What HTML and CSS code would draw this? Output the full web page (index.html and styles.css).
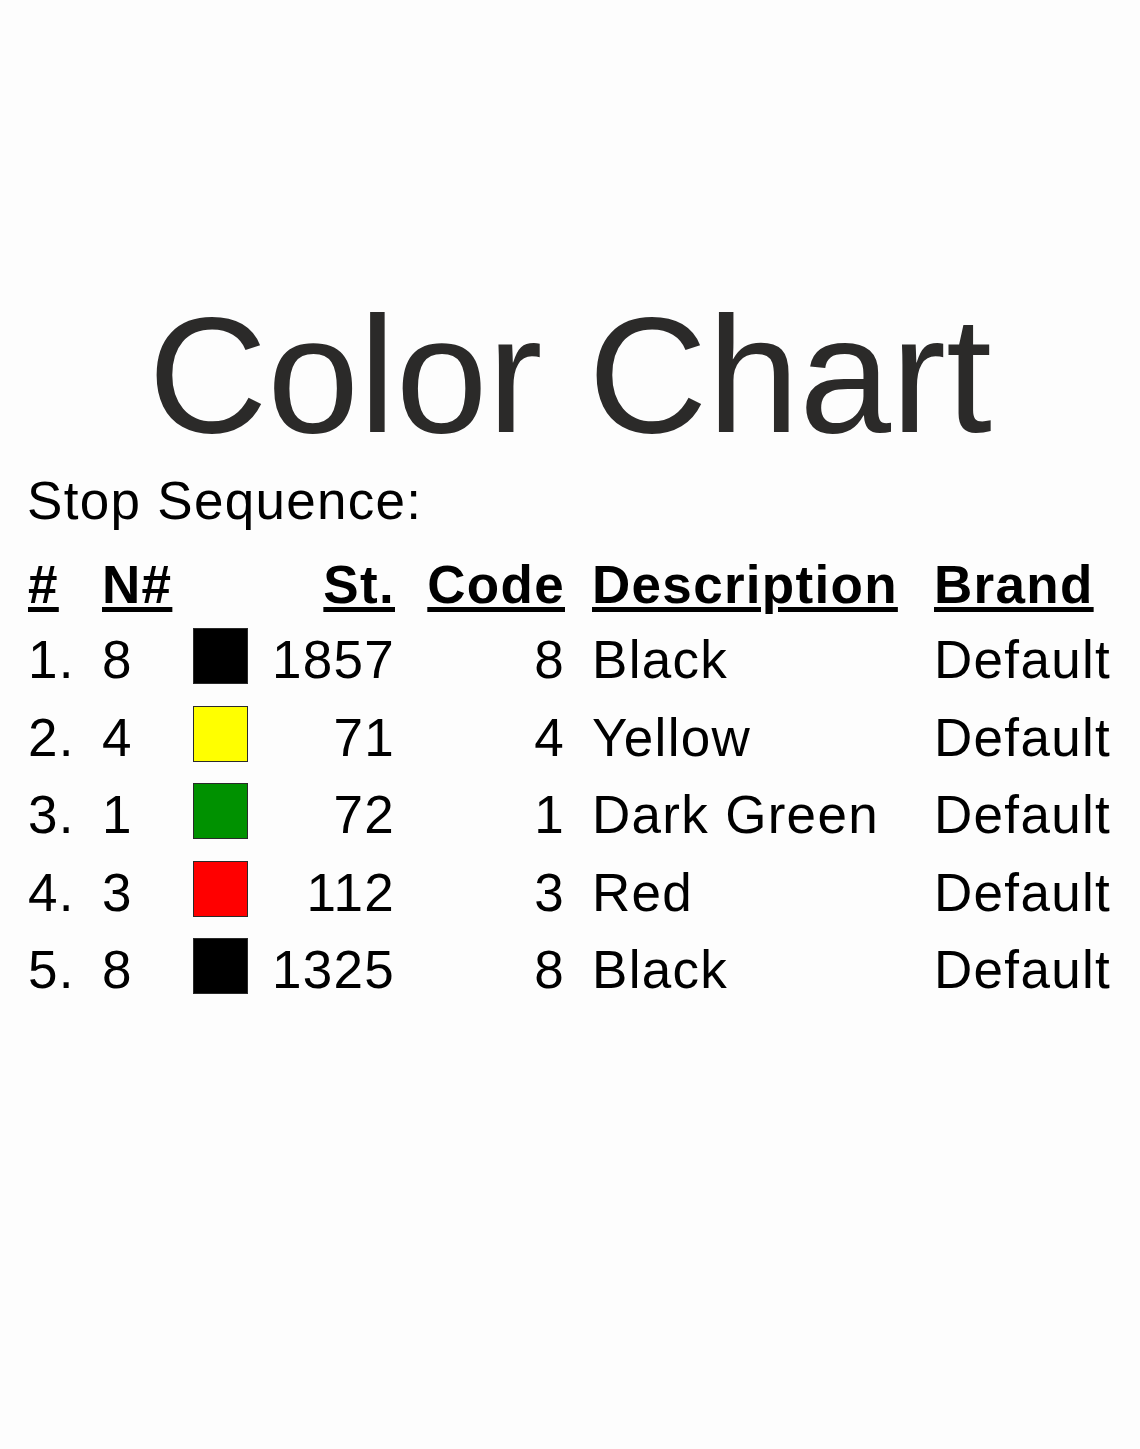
FILE: index.html
```html
<!DOCTYPE html>
<html lang="en">
<head>
<meta charset="utf-8">
<title>Color Chart</title>
<link rel="stylesheet" href="styles.css">
</head>
<body>
<main class="page">
  <h1 class="title">Color Chart</h1>
  <p class="subtitle">Stop Sequence:</p>
  <div class="chart">
    <div class="row head">
      <span class="c-num"><u>#</u></span>
      <span class="c-n"><u>N#</u></span>
      <span class="c-sw"></span>
      <span class="c-st"><u>St.</u></span>
      <span class="c-code"><u>Code</u></span>
      <span class="c-desc"><u>Description</u></span>
      <span class="c-brand"><u>Brand</u></span>
    </div>
    <div class="row">
      <span class="c-num">1.</span>
      <span class="c-n">8</span>
      <span class="c-sw"><i class="swatch sw-black"></i></span>
      <span class="c-st">1857</span>
      <span class="c-code">8</span>
      <span class="c-desc">Black</span>
      <span class="c-brand">Default</span>
    </div>
    <div class="row">
      <span class="c-num">2.</span>
      <span class="c-n">4</span>
      <span class="c-sw"><i class="swatch sw-yellow"></i></span>
      <span class="c-st">71</span>
      <span class="c-code">4</span>
      <span class="c-desc">Yellow</span>
      <span class="c-brand">Default</span>
    </div>
    <div class="row">
      <span class="c-num">3.</span>
      <span class="c-n">1</span>
      <span class="c-sw"><i class="swatch sw-green"></i></span>
      <span class="c-st">72</span>
      <span class="c-code">1</span>
      <span class="c-desc">Dark Green</span>
      <span class="c-brand">Default</span>
    </div>
    <div class="row">
      <span class="c-num">4.</span>
      <span class="c-n">3</span>
      <span class="c-sw"><i class="swatch sw-red"></i></span>
      <span class="c-st">112</span>
      <span class="c-code">3</span>
      <span class="c-desc">Red</span>
      <span class="c-brand">Default</span>
    </div>
    <div class="row">
      <span class="c-num">5.</span>
      <span class="c-n">8</span>
      <span class="c-sw"><i class="swatch sw-black"></i></span>
      <span class="c-st">1325</span>
      <span class="c-code">8</span>
      <span class="c-desc">Black</span>
      <span class="c-brand">Default</span>
    </div>
  </div>
</main>
</body>
</html>
```

FILE: styles.css
```css
html, body {
  margin: 0;
  padding: 0;
  background: #fdfdfd;
}

.page {
  width: 1140px;
  height: 1449px;
  box-sizing: border-box;
  padding-top: 293px;
  font-family: "Liberation Sans", Arial, sans-serif;
  color: #000;
}

.title {
  margin: 0;
  font-size: 165px;
  line-height: 165px;
  font-weight: normal;
  text-align: center;
  color: #2b2a29;
}

.subtitle {
  margin: 14px 0 0 27px;
  font-size: 53px;
  line-height: 58px;
  letter-spacing: 1.3px;
}

.chart {
  margin-top: 26px;
  padding-left: 28px;
  font-size: 53px;
  letter-spacing: 1.3px;
}

.row {
  display: grid;
  grid-template-columns: 74px 91px 55px 147px 170px 369px auto;
  height: 77.5px;
  line-height: 77.5px;
  white-space: nowrap;
}

.row.head {
  height: 58px;
  line-height: 58px;
  margin-bottom: 7px;
  font-weight: bold;
}

.row.head u {
  text-decoration: underline;
  text-decoration-thickness: 5px;
  text-underline-offset: 4px;
}

.c-st,
.c-code {
  text-align: right;
}

.c-desc {
  padding-left: 27px;
}

.c-sw {
  display: flex;
  align-items: flex-start;
}

.swatch {
  display: block;
  width: 55px;
  height: 56px;
  margin-top: 7px;
  box-sizing: border-box;
  border: 1px solid #2a2a2a;
}

.sw-black { background: #000; }
.sw-yellow { background: #ffff00; }
.sw-green { background: #009100; }
.sw-red { background: #ff0000; }
```
